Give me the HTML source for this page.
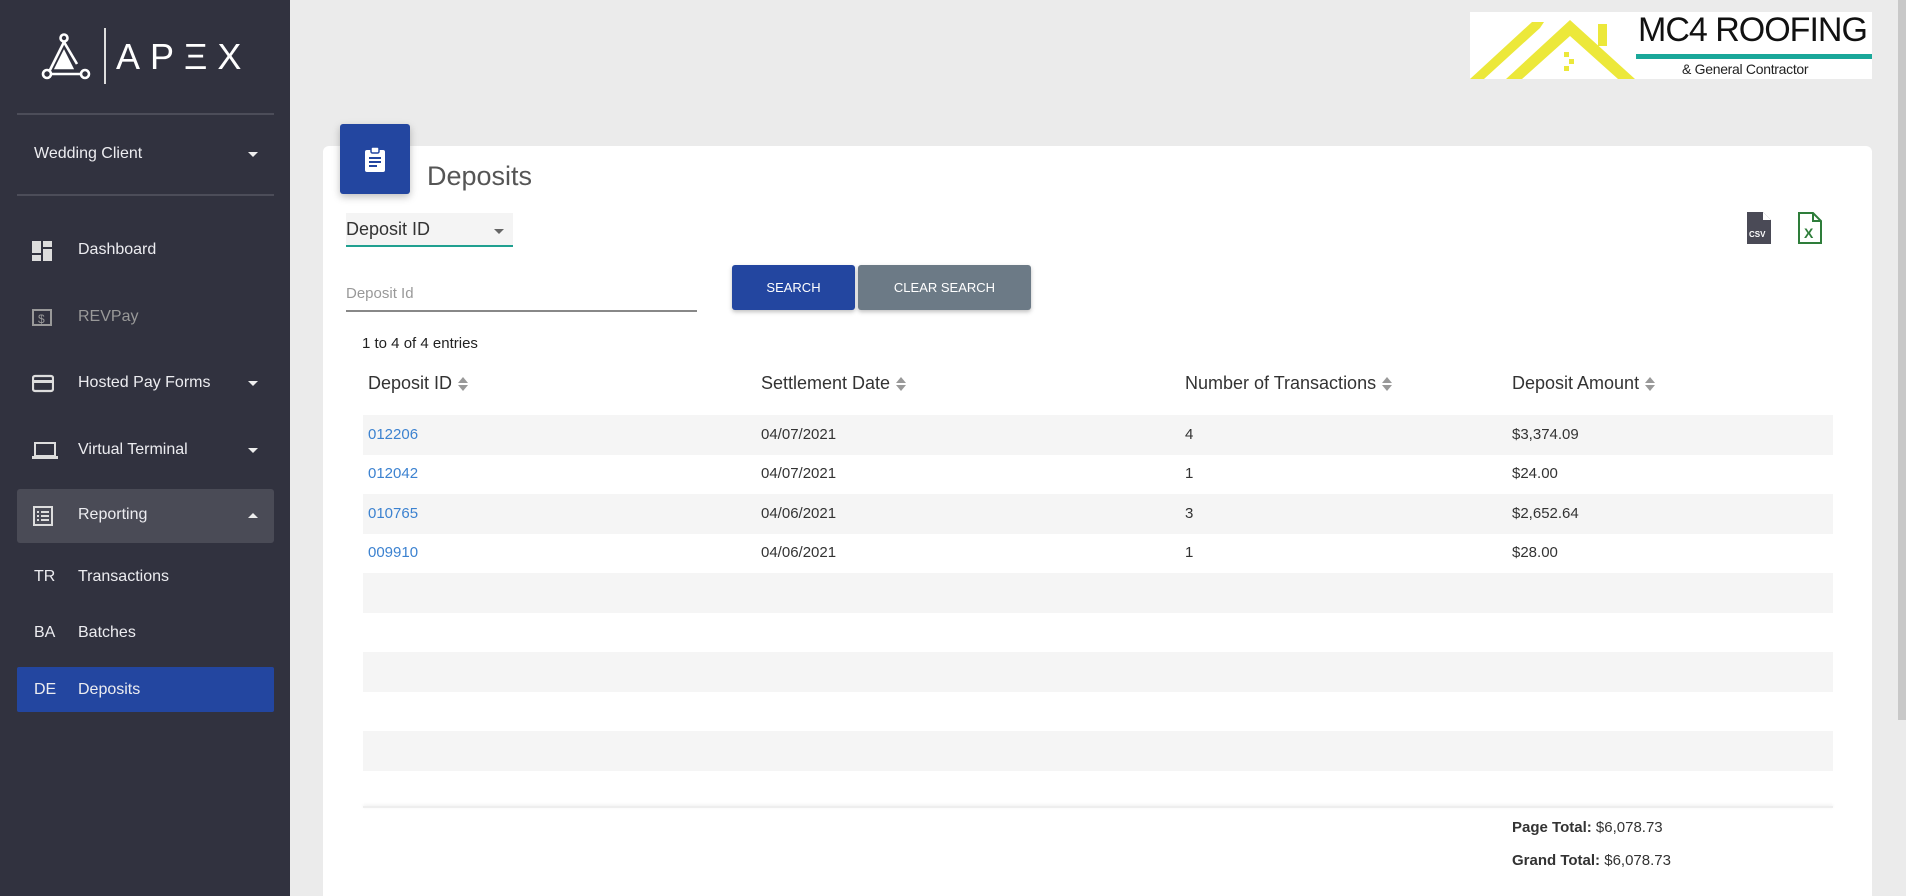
<!DOCTYPE html>
<html><head><meta charset="utf-8"><style>
*{box-sizing:border-box;margin:0;padding:0}
html{width:1906px;height:896px;overflow:hidden}
body{width:1906px;height:896px;overflow:hidden;background:#ebebeb;font-family:"Liberation Sans",sans-serif;position:relative}
.sb{position:absolute;left:0;top:0;width:290px;height:896px;background:#31323f;color:#e8e8ec}
.hr{position:absolute;left:17px;width:257px;height:2px;background:#4c4d59}
.mi{position:absolute;left:0;width:290px;font-size:16px;color:#ececf0}
.mi .t{position:absolute;left:78px;white-space:nowrap}
.mi .ic{position:absolute;left:32px}
.mi .ar{position:absolute;left:248px;top:7px;width:0;height:0;border-left:5px solid transparent;border-right:5px solid transparent;border-top:5px solid #eee}
.card{position:absolute;left:323px;top:146px;width:1549px;height:750px;background:#fff;border-radius:6px 6px 0 0}
.abs{position:absolute;white-space:nowrap}
.th{position:absolute;top:373px;font-size:18px;color:#333}
.sort{display:inline-block;vertical-align:middle;margin-left:6px;width:10px;height:16px;position:relative}
.sort:before{content:"";position:absolute;left:0;top:1px;border-left:5px solid transparent;border-right:5px solid transparent;border-bottom:6px solid #999}
.sort:after{content:"";position:absolute;left:0;top:9px;border-left:5px solid transparent;border-right:5px solid transparent;border-top:6px solid #999}
.row{position:absolute;left:363px;width:1470px;height:39.5px;font-size:15px;color:#333}
.row.s{background:#f5f5f5}
.row span{position:absolute;top:11px}
.c1{left:5px;color:#3c82d0}.c2{left:398px}.c3{left:822px}.c4{left:1149px}
</style></head><body>
<div class="sb">
 <svg class="abs" style="left:40px;top:30px" width="52" height="52" viewBox="0 0 52 52" fill="none" stroke="#fff" stroke-width="2.6">
  <circle cx="24" cy="8" r="3.5"/><circle cx="7" cy="44" r="4"/><circle cx="45" cy="44" r="4"/>
  <path d="M24 12 L10 40 M24 12 L37 34 M11 44 L41 44"/>
  <path d="M24 22 L16 38 L32 38 Z" fill="#fff"/>
 </svg>
 <div class="abs" style="left:104px;top:28px;width:2px;height:56px;background:#ddd"></div>
 <div class="abs" style="left:116px;top:36px;font-size:36px;letter-spacing:10px;color:#fff">APΞX</div>
 <div class="hr" style="top:113px"></div>
 <div class="mi" style="top:145px"><span class="t" style="left:34px">Wedding Client</span><span class="ar"></span></div>
 <div class="hr" style="top:194px"></div>
 <div class="mi" style="top:241px"><svg class="ic" width="20" height="20"><rect x="0" y="0" width="9" height="12" fill="#ddd"/><rect x="11" y="0" width="9" height="6" fill="#ddd"/><rect x="0" y="14" width="9" height="6" fill="#ddd"/><rect x="11" y="8" width="9" height="12" fill="#ddd"/></svg><span class="t">Dashboard</span></div>
 <div class="mi" style="top:308px;color:#999"><svg class="ic" width="20" height="20"><rect x="1" y="2" width="18" height="15" fill="none" stroke="#999" stroke-width="2"/><text x="6" y="15" font-size="12" fill="#999" font-family="Liberation Sans">$</text></svg><span class="t">REVPay</span></div>
 <div class="mi" style="top:374px"><svg class="ic" width="22" height="20"><rect x="1" y="2" width="20" height="15" rx="2" fill="none" stroke="#ddd" stroke-width="2.2"/><rect x="1" y="6" width="20" height="3" fill="#ddd"/></svg><span class="t">Hosted Pay Forms</span><span class="ar"></span></div>
 <div class="mi" style="top:441px"><svg class="ic" width="26" height="20"><rect x="3" y="2" width="20" height="13" fill="none" stroke="#ddd" stroke-width="2"/><rect x="0" y="15" width="26" height="3" fill="#ddd"/></svg><span class="t">Virtual Terminal</span><span class="ar"></span></div>
 <div class="abs" style="left:17px;top:489px;width:257px;height:54px;background:#4a4b56;border-radius:3px"></div>
 <div class="mi" style="top:506px"><svg class="ic" width="22" height="20"><rect x="2" y="1" width="18" height="18" fill="none" stroke="#ddd" stroke-width="2"/><path d="M5 6h2M9 6h8M5 10h2M9 10h8M5 14h2M9 14h8" stroke="#ddd" stroke-width="2"/></svg><span class="t">Reporting</span><span class="ar" style="border-top:0;border-bottom:5px solid #eee"></span></div>
 <div class="mi" style="top:568px"><span class="ic" style="left:34px">TR</span><span class="t">Transactions</span></div>
 <div class="mi" style="top:624px"><span class="ic" style="left:34px">BA</span><span class="t">Batches</span></div>
 <div class="abs" style="left:17px;top:667px;width:257px;height:45px;background:#2346a0;border-radius:2px"></div>
 <div class="mi" style="top:681px"><span class="ic" style="left:34px">DE</span><span class="t">Deposits</span></div>
</div>
<!-- logo -->
<div class="abs" style="left:1470px;top:12px;width:402px;height:67px;background:#fff;overflow:hidden">
 <svg class="abs" style="left:0;top:0" width="170" height="67"><path d="M0 67 L62 10 L74 10 L70 16 L14 67 Z" fill="#ece83a"/><path d="M36 67 L100 8 L165 67 L148 67 L100 24 L52 67 Z" fill="#ece83a"/><rect x="128" y="12" width="9" height="22" fill="#ece83a"/><rect x="94" y="40" width="5" height="5" fill="#ece83a"/><rect x="99" y="47" width="5" height="5" fill="#ece83a"/><rect x="94" y="54" width="5" height="5" fill="#ece83a"/></svg>
 <div class="abs" style="left:168px;top:-2px;font-size:34px;line-height:40px;color:#111;letter-spacing:-1px">MC4 ROOFING</div>
 <div class="abs" style="left:166px;top:42px;width:236px;height:5px;background:#1aa89a"></div>
 <div class="abs" style="left:212px;top:49px;font-size:14px;color:#222;letter-spacing:-0.3px">&amp; General Contractor</div>
</div>
<div class="abs" style="left:1898px;top:0;width:8px;height:720px;background:#c8c8c8"></div>
<div class="card"></div>
<div class="abs" style="left:340px;top:124px;width:70px;height:70px;background:#2346a0;border-radius:3px;box-shadow:0 3px 8px rgba(0,0,0,.25)">
 <svg class="abs" style="left:24px;top:22px" width="22" height="26"><rect x="1" y="4" width="20" height="22" rx="2" fill="#fff"/><rect x="7" y="1" width="8" height="6" rx="1.5" fill="#fff" stroke="#2346a0" stroke-width="1.5"/><path d="M5 12h12M5 16h12M5 20h8" stroke="#2346a0" stroke-width="2"/></svg>
</div>
<div class="abs" style="left:427px;top:161px;font-size:27px;color:#555">Deposits</div>
<div class="abs" style="left:346px;top:213px;width:167px;height:34px;background:#f4f4f4;border-bottom:2px solid #20a090"></div>
<div class="abs" style="left:346px;top:219px;font-size:18px;color:#333">Deposit ID</div>
<div class="abs" style="left:494px;top:229px;border-left:5px solid transparent;border-right:5px solid transparent;border-top:5px solid #666"></div>
<div class="abs" style="left:346px;top:285px;font-size:15px;color:#999">Deposit Id</div>
<div class="abs" style="left:346px;top:310px;width:351px;height:1.5px;background:#888"></div>
<div class="abs" style="left:732px;top:265px;width:123px;height:45px;background:#2346a0;border-radius:3px;color:#fff;font-size:13px;text-align:center;line-height:45px;box-shadow:0 2px 4px rgba(0,0,0,.25)">SEARCH</div>
<div class="abs" style="left:858px;top:265px;width:173px;height:45px;background:#6c7a86;border-radius:3px;color:#fff;font-size:13px;text-align:center;line-height:45px;box-shadow:0 2px 4px rgba(0,0,0,.25)">CLEAR SEARCH</div>
<div class="abs" style="left:362px;top:335px;font-size:15px;color:#222">1 to 4 of 4 entries</div>
<div class="th" style="left:368px">Deposit ID<span class="sort"></span></div>
<div class="th" style="left:761px">Settlement Date<span class="sort"></span></div>
<div class="th" style="left:1185px">Number of Transactions<span class="sort"></span></div>
<div class="th" style="left:1512px">Deposit Amount<span class="sort"></span></div>
<div class="row s" style="top:415px"><span class="c1">012206</span><span class="c2">04/07/2021</span><span class="c3">4</span><span class="c4">$3,374.09</span></div>
<div class="row" style="top:454px"><span class="c1">012042</span><span class="c2">04/07/2021</span><span class="c3">1</span><span class="c4">$24.00</span></div>
<div class="row s" style="top:494px"><span class="c1">010765</span><span class="c2">04/06/2021</span><span class="c3">3</span><span class="c4">$2,652.64</span></div>
<div class="row" style="top:533px"><span class="c1">009910</span><span class="c2">04/06/2021</span><span class="c3">1</span><span class="c4">$28.00</span></div>
<div class="row s" style="top:573px"></div>
<div class="row s" style="top:652px"></div>
<div class="row s" style="top:731px"></div>
<div class="abs" style="left:363px;top:806px;width:1470px;height:2px;background:#eee;box-shadow:0 -1px 3px rgba(0,0,0,.08)"></div>
<div class="abs" style="left:1512px;top:819px;font-size:15px;color:#333"><b>Page Total:</b> $6,078.73</div>
<div class="abs" style="left:1512px;top:852px;font-size:15px;color:#333"><b>Grand Total:</b> $6,078.73</div>
<svg class="abs" style="left:1747px;top:212px" width="24" height="32"><path d="M0 0h16l8 8v24H0z" fill="#4a4a56"/><path d="M16 0v8h8" fill="#fff"/><text x="2" y="25" font-size="8" fill="#fff" font-family="Liberation Sans" font-weight="bold">CSV</text></svg>
<svg class="abs" style="left:1798px;top:212px" width="24" height="32"><path d="M1 1h14l8 8v22H1z" fill="none" stroke="#2e7d3a" stroke-width="2"/><path d="M15 1v8h8" fill="none" stroke="#2e7d3a" stroke-width="2"/><text x="6" y="26" font-size="14" fill="#2e7d3a" font-family="Liberation Sans" font-weight="bold">X</text></svg>
</body></html>
